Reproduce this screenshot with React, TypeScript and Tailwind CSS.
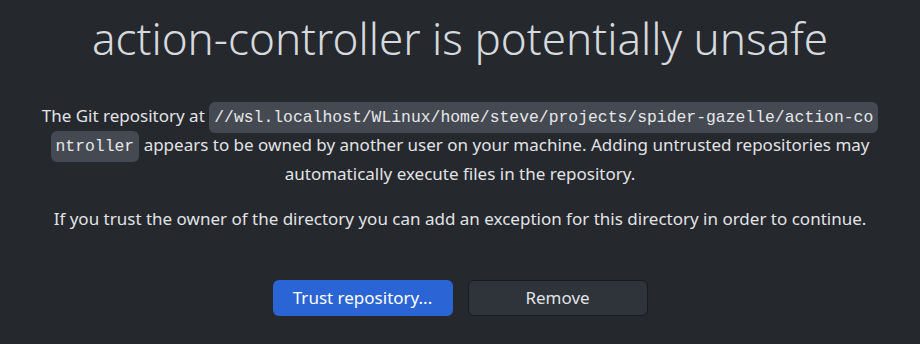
export default function App() {
  return (
    <div className="flex h-[344px] w-[920px] flex-col items-center overflow-hidden bg-[#25282d] px-10 font-['Noto_Sans',sans-serif] text-[#e1e3e6]">
      <h1 className="mt-[8px] text-[44px] font-light leading-[60px] text-[#d6d9dd]">
        action-controller is potentially unsafe
      </h1>
      <p className="mt-[34px] w-full break-all text-center text-[17px] leading-[27px]">
        <span className="break-normal">The Git repository at </span>
        <code className="rounded-md bg-[#454a52] px-[5px] py-[6px] font-['Liberation_Mono',monospace] text-[16.4px] text-[#e6e8ea] [box-decoration-break:clone]">
          //wsl.localhost/WLinux/home/steve/projects/spider-gazelle/action-controller
        </code>
        <span className="break-normal">
          {" "}appears to be owned by another user on your machine. Adding untrusted repositories may
          automatically execute files in the repository.
        </span>
      </p>
      <p className="mt-[18px] text-center text-[17px] leading-[27px]">
        If you trust the owner of the directory you can add an exception for this directory in order to continue.
      </p>
      <div className="mt-[48px] flex gap-[15px]">
        <button className="h-9 w-[180px] rounded-md bg-[#2b65d5] text-[17px] text-white">
          Trust repository...
        </button>
        <button className="h-9 w-[180px] rounded-md border border-[#191b1f] bg-[#2f333a] text-[17px] text-[#e1e3e6]">
          Remove
        </button>
      </div>
    </div>
  );
}
